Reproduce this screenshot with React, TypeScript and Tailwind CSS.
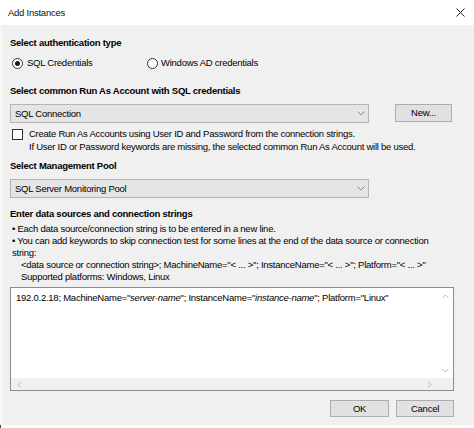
import React from "react";

const font = { fontFamily: '"Liberation Sans", Arial, sans-serif' };

function Radio({ checked }: { checked?: boolean }) {
  return (
    <span className="flex h-[11px] w-[11px] shrink-0 items-center justify-center rounded-full border border-[#333333] bg-white">
      {checked && <span className="h-[5px] w-[5px] rounded-full bg-[#1a1a1a]" />}
    </span>
  );
}

function Chevron() {
  return (
    <svg width="8" height="5" viewBox="0 0 8 5" className="shrink-0">
      <path d="M0.5 0.5 L4 4 L7.5 0.5" fill="none" stroke="#8a8a8a" strokeWidth="1" />
    </svg>
  );
}

function Combo({ label }: { label: string }) {
  return (
    <div className="flex h-[19px] w-[359px] items-center justify-between border border-[#b4b4b4] bg-[#e5e5e5] pl-[4px] pr-[3px]">
      <span>{label}</span>
      <Chevron />
    </div>
  );
}

function Arrow({ dir }: { dir: "up" | "down" | "left" | "right" }) {
  const d = {
    up: "M0.5 4 L3.5 1 L6.5 4",
    down: "M0.5 1 L3.5 4 L6.5 1",
    left: "M4 0.5 L1 3.5 L4 6.5",
    right: "M1 0.5 L4 3.5 L1 6.5",
  }[dir];
  const vertical = dir === "up" || dir === "down";
  return (
    <svg width={vertical ? 7 : 5} height={vertical ? 5 : 7} viewBox={vertical ? "0 0 7 5" : "0 0 5 7"}>
      <path d={d} fill="none" stroke="#b5b5b5" strokeWidth="1" />
    </svg>
  );
}

export default function App() {
  return (
    <div
      className="flex h-[428px] w-[474px] flex-col overflow-hidden bg-white text-[9.5px] leading-[12px] tracking-[-0.25px] text-black"
      style={font}
    >
      {/* title bar */}
      <div className="flex h-[25px] shrink-0 items-center justify-between pl-[8px] pr-[9px]">
        <span className="text-[#111111]">Add Instances</span>
        <svg width="9" height="9" viewBox="0 0 9 9">
          <path d="M0.5 0.5 L8.5 8.5 M8.5 0.5 L0.5 8.5" stroke="#222222" strokeWidth="1" />
        </svg>
      </div>

      {/* dialog body */}
      <div className="flex h-[400px] shrink-0 flex-col border-l-2 border-[#f7f7f7] bg-[#f0f0f0] pl-[8px] pr-[10px] pt-[12px]">
        <div className="font-bold">Select authentication type</div>

        <div className="mt-[7px] flex h-[14px] items-center pl-[2px]">
          <label className="flex w-[135px] items-center gap-[4px]">
            <Radio checked />
            <span>SQL Credentials</span>
          </label>
          <label className="flex items-center gap-[3px]">
            <Radio />
            <span>Windows AD credentials</span>
          </label>
        </div>

        <div className="mt-[15px] font-bold">Select common Run As Account with SQL credentials</div>

        <div className="mt-[7px] flex items-start">
          <Combo label="SQL Connection" />
          <button className="ml-[26px] flex h-[18px] w-[57px] items-center justify-center border border-[#adadad] bg-[#e1e1e1]">
            New...
          </button>
        </div>

        <div className="mt-[4px] flex items-start pl-[2px] leading-[13px]">
          <span className="mt-[2px] h-[11px] w-[11px] shrink-0 border border-[#333333] bg-white" />
          <div className="ml-[6px] flex flex-col">
            <span>Create Run As Accounts using User ID and Password from the connection strings.</span>
            <span>If User ID or Password keywords are missing, the selected common Run As Account will be used.</span>
          </div>
        </div>

        <div className="mt-[7px] font-bold">Select Management Pool</div>

        <div className="mt-[7px]">
          <Combo label="SQL Server Monitoring Pool" />
        </div>

        <div className="mt-[10px] font-bold">Enter data sources and connection strings</div>

        <div className="mt-[3px] flex flex-col whitespace-nowrap pl-[2px]">
          <span>• Each data source/connection string is to be entered in a new line.</span>
          <span>• You can add keywords to skip connection test for some lines at the end of the data source or connection</span>
          <span>string:</span>
          <span className="pl-[9px]">
            &lt;data source or connection string&gt;; MachineName="&lt; ... &gt;"; InstanceName="&lt; ... &gt;"; Platform="&lt; ... &gt;"
          </span>
          <span className="pl-[9px]">Supported platforms: Windows, Linux</span>
        </div>

        {/* multi-line input with scroll bars */}
        <div className="mt-[4px] flex h-[104px] w-[444px] flex-col border border-[#8c8c8c] bg-white">
          <div className="flex min-h-0 flex-1">
            <div className="flex-1 whitespace-nowrap pl-[5px] pt-[4px]">
              192.0.2.18; MachineName="<i>server-name</i>"; InstanceName="<i>instance-name</i>"; Platform="Linux"
            </div>
            <div className="flex w-[16px] flex-col items-center justify-between pb-[5px] pt-[6px]">
              <Arrow dir="up" />
              <Arrow dir="down" />
            </div>
          </div>
          <div className="flex h-[12px] shrink-0 items-center justify-between bg-[#f0f0f0] pl-[6px] pr-[21px]">
            <Arrow dir="left" />
            <Arrow dir="right" />
          </div>
        </div>

        <div className="mt-[9px] flex w-[444px] justify-end gap-[7px]">
          <button className="flex h-[17px] w-[59px] items-center justify-center border border-[#adadad] bg-[#e1e1e1]">
            OK
          </button>
          <button className="flex h-[17px] w-[58px] items-center justify-center border border-[#adadad] bg-[#e1e1e1]">
            Cancel
          </button>
        </div>
      </div>

      <div className="flex-1 border-l border-[#444444] bg-white" />
    </div>
  );
}
